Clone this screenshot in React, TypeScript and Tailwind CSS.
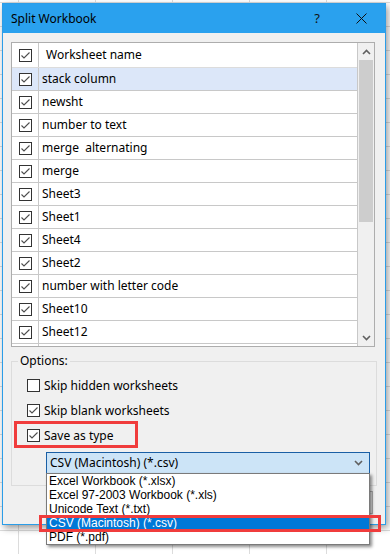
import React from 'react';

const sheets = [
  'stack column',
  'newsht',
  'number to text',
  'merge  alternating',
  'merge',
  'Sheet3',
  'Sheet1',
  'Sheet4',
  'Sheet2',
  'number with letter code',
  'Sheet10',
  'Sheet12',
];

const fileTypes = [
  'Excel Workbook (*.xlsx)',
  'Excel 97-2003 Workbook (*.xls)',
  'Unicode Text (*.txt)',
  'CSV (Macintosh) (*.csv)',
  'PDF (*.pdf)',
];

function CheckBox({ checked }: { checked: boolean }) {
  return (
    <span className="w-[13px] h-[13px] border border-[#333] bg-white flex items-center justify-center shrink-0">
      {checked && (
        <svg width="11" height="11" viewBox="0 0 11 11">
          <path d="M1.5 5.5 L4 8 L9.5 2.5" fill="none" stroke="#4d4d4d" strokeWidth="1.1" />
        </svg>
      )}
    </span>
  );
}

function Chevron({ up }: { up?: boolean }) {
  return (
    <svg width="9" height="6" viewBox="0 0 9 6">
      <path d={up ? 'M1 5 L4.5 1.5 L8 5' : 'M1 1 L4.5 4.5 L8 1'} fill="none" stroke="#606060" strokeWidth="1.6" />
    </svg>
  );
}

function OptionRow({ label, checked, highlight }: { label: string; checked: boolean; highlight?: boolean }) {
  return (
    <div className="relative h-[25px] flex items-center gap-[4px] pl-[15px]">
      <CheckBox checked={checked} />
      <span className="text-[12px] text-black">{label}</span>
      {highlight && (
        <div className="absolute -top-[2px] left-[2px] w-[124px] h-[27px] border-[3px] border-[#f03c3c]" />
      )}
    </div>
  );
}

export default function App() {
  return (
    <div className="w-[390px] h-[554px] overflow-hidden bg-white pt-[3px] pl-[2px] font-['Noto_Sans',sans-serif] bg-[linear-gradient(to_right,#dcdcdc_1px,transparent_1px),linear-gradient(to_bottom,#dcdcdc_1px,transparent_1px)] bg-size-[77px_24px] bg-position-[18px_2px]">
      <div className="w-[384px] h-[522px] border border-[#2b9de8] bg-[#f0f0f0] flex flex-col shadow-[2px_3px_7px_rgba(0,0,0,0.4)]">
        {/* title bar */}
        <div className="h-[29px] bg-[#2aa1ee] flex items-center pl-[8px] shrink-0">
          <span className="text-[12px] text-black">Split Workbook</span>
          <span className="ml-auto text-[13px] text-[#111] mr-[36px]">?</span>
          <svg width="11" height="11" viewBox="0 0 11 11" className="mr-[18px]">
            <path d="M0.5 0.5 L10.5 10.5 M10.5 0.5 L0.5 10.5" stroke="#111" strokeWidth="1" />
          </svg>
        </div>

        <div className="flex-1 pt-[9px] relative">
          {/* worksheet list */}
          <div className="ml-[8px] w-[364px] h-[305px] border border-[#adadad] bg-white flex">
            <div className="w-[346px] border-r border-[#c8c8c8] overflow-hidden">
              <div className="h-[25px] flex border-b border-[#dcdcdc]">
                <div className="w-[27px] border-r border-[#c8c8c8] flex items-center justify-center">
                  <CheckBox checked />
                </div>
                <div className="pl-[7px] flex items-center text-[12px] text-black">Worksheet name</div>
              </div>
              {sheets.map((name, i) => (
                <div key={name} className={`h-[23px] flex border-b border-[#c8c8c8] ${i === 0 ? 'bg-[#dce7f9]' : 'bg-white'}`}>
                  <div className="w-[27px] border-r border-[#c8c8c8] flex items-center justify-center">
                    <CheckBox checked />
                  </div>
                  <div className="pl-[3px] flex items-center text-[12px] text-black whitespace-pre">{name}</div>
                </div>
              ))}
              <div className="h-[23px] flex">
                <div className="w-[27px] border-r border-[#c8c8c8]" />
              </div>
            </div>
            {/* scrollbar */}
            <div className="w-[16px] bg-[#f0f0f0] flex flex-col">
              <div className="h-[17px] flex items-center justify-center">
                <Chevron up />
              </div>
              <div className="h-[162px] mx-[1px] bg-[#cdcdcd]" />
              <div className="mt-auto h-[17px] flex items-center justify-center">
                <Chevron />
              </div>
            </div>
          </div>

          {/* options */}
          <fieldset className="ml-[8px] mt-[6px] w-[366px] border border-[#dcdcdc] pt-[4px] pb-[11px]">
            <legend className="ml-[6px] px-[2px] text-[12px] leading-[16px] text-black">Options:</legend>
            <OptionRow label="Skip hidden worksheets" checked={false} />
            <OptionRow label="Skip blank worksheets" checked />
            <OptionRow label="Save as type" checked highlight />
            <div className="relative ml-[34px] mt-[4px] w-[324px] h-[22px] border border-[#1a5fa5] bg-[#cce4f7] flex items-center pl-[3px] pr-[6px]">
              <span className="text-[12px] text-black">CSV (Macintosh) (*.csv)</span>
              <span className="ml-auto">
                <Chevron />
              </span>
              {/* open dropdown */}
              <div className="absolute top-full -left-[1px] w-[324px] border border-[#7a7a7a] bg-white z-10 shadow-[2px_2px_3px_rgba(0,0,0,0.45)] font-['Liberation_Sans',Arial,sans-serif]">
                {fileTypes.map((t, i) => (
                  <div
                    key={t}
                    className={`relative h-[14px] flex items-center pl-[2px] text-[12px] leading-[14px] ${i === 3 ? 'bg-[#0078d7] text-white' : 'text-black'}`}
                  >
                    {t}
                    {i === 3 && (
                      <div className="absolute -top-[1px] -left-[8px] w-[342px] h-[17px] border-[3px] border-[#f03c3c]" />
                    )}
                  </div>
                ))}
              </div>
            </div>
          </fieldset>

          {/* buttons (mostly hidden by the dropdown) */}
          <div className="mt-[5px] flex justify-end gap-[8px] pr-[12px]">
            <button className="w-[75px] h-[23px] border border-[#adadad] bg-[#e1e1e1] text-[12px]">Ok</button>
            <button className="w-[75px] h-[23px] border border-[#adadad] bg-[#e1e1e1] text-[12px]">Cancel</button>
          </div>
        </div>
      </div>
    </div>
  );
}
